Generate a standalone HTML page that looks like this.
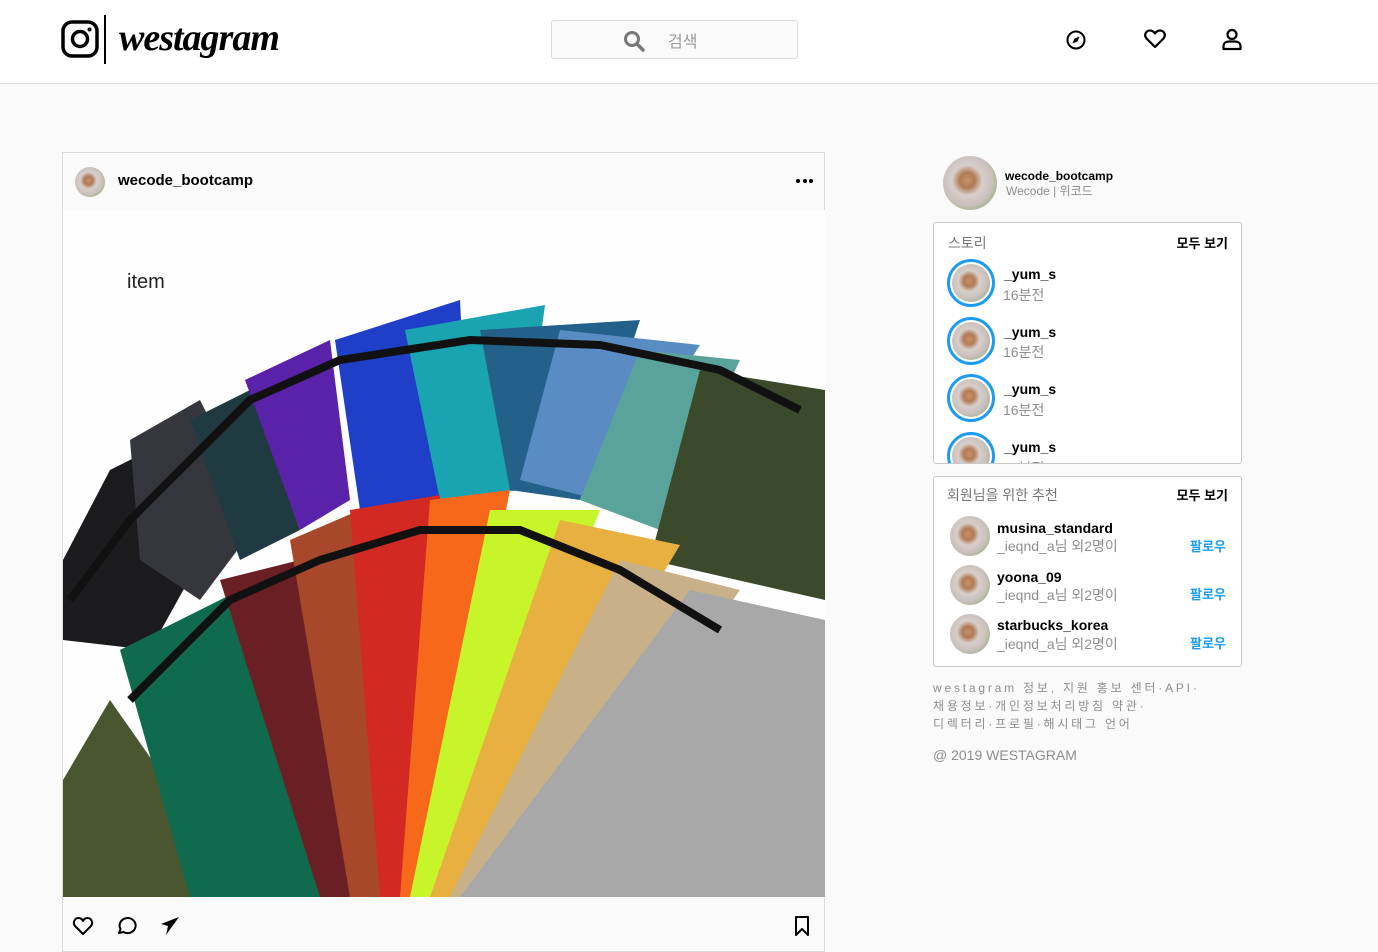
<!DOCTYPE html>
<html><head><meta charset="utf-8"><style>
*{margin:0;padding:0;box-sizing:border-box}
body{width:1378px;height:944px;overflow:hidden;background:#fafafa;font-family:"Liberation Sans","Noto Sans CJK KR",sans-serif;position:relative}
.hdr{position:absolute;left:0;top:0;width:1378px;height:84px;background:#fff;border-bottom:1px solid #dbdbdb}
.abs{position:absolute}
.av{border-radius:50%;background:radial-gradient(circle at 45% 45%,#c9926a 0,#b07a55 18%,#d8cfcb 36%,#c9c0bd 60%,#9ab07a 80%,#d9d2cf 100%)}
.box{position:absolute;left:933px;width:309px;background:#fff;border:1px solid #c8c8c8;border-radius:3px;overflow:hidden}
.ring{position:absolute;left:13px;width:48px;height:48px;border-radius:50%;border:3px solid #1c9bf0;padding:2px;background:#fff}
.ring div{width:100%;height:100%}
.nm{position:absolute;font-weight:bold;font-size:14px;color:#000}
.sub{position:absolute;font-size:14px;color:#8e8e8e}
.fol{position:absolute;right:15px;font-size:13px;font-weight:bold;color:#1c9bf0}
</style></head><body>
<div class="hdr">
 <svg class="abs" style="left:61px;top:20px" width="38" height="38" viewBox="0 0 38 38"><rect x="2" y="2" width="34" height="34" rx="9" fill="none" stroke="#000" stroke-width="3.5"/><circle cx="19" cy="19" r="7.5" fill="none" stroke="#000" stroke-width="3.5"/><circle cx="28.5" cy="9.5" r="2" fill="#000"/></svg>
 <div class="abs" style="left:104px;top:15px;width:2px;height:49px;background:#000"></div>
 <div class="abs" style="left:119px;top:16px;font-family:'Liberation Serif',serif;font-style:italic;font-weight:bold;font-size:38px;letter-spacing:-1px;color:#000">westagram</div>
 <div class="abs" style="left:551px;top:20px;width:247px;height:39px;background:#fafafa;border:1px solid #dbdbdb;border-radius:3px"></div>
 <svg class="abs" style="left:623px;top:30px" width="22" height="22" viewBox="0 0 22 22"><circle cx="9" cy="9" r="6.5" fill="none" stroke="#777" stroke-width="3"/><line x1="14" y1="14" x2="20" y2="20" stroke="#777" stroke-width="3.5" stroke-linecap="round"/></svg>
 <div class="abs" style="left:668px;top:28px;font-size:16px;color:#999">검색</div>
 <svg class="abs" style="left:1065px;top:29px" width="22" height="22" viewBox="0 0 22 22"><circle cx="11" cy="11" r="8.5" fill="none" stroke="#000" stroke-width="2"/><path d="M14.5 7.5 L12.5 12.5 L7.5 14.5 L9.5 9.5Z" fill="#000"/></svg>
 <svg class="abs" style="left:1143px;top:28px" width="24" height="22" viewBox="0 0 24 22"><path d="M12 19 L3.5 10.5 C0.5 7 3 2.5 7 2.5 C9.5 2.5 11 4 12 5.5 C13 4 14.5 2.5 17 2.5 C21 2.5 23.5 7 20.5 10.5Z" fill="none" stroke="#000" stroke-width="2.2" stroke-linejoin="round"/></svg>
 <svg class="abs" style="left:1220px;top:27px" width="24" height="24" viewBox="0 0 24 24"><circle cx="12" cy="7.5" r="4.5" fill="none" stroke="#000" stroke-width="2.2"/><path d="M3.5 22 V19 C3.5 16 6 14.5 9 14.5 H15 C18 14.5 20.5 16 20.5 19 V22Z" fill="none" stroke="#000" stroke-width="2.2" stroke-linejoin="round"/></svg>
</div>

<div class="abs" style="left:62px;top:152px;width:763px;height:800px;border:1px solid #dbdbdb;background:#fafafa">
 <div class="abs av" style="left:12px;top:14px;width:30px;height:30px"></div>
 <div class="nm" style="left:55px;top:19px;font-size:15px">wecode_bootcamp</div>
 <div class="abs" style="left:733px;top:26px;width:17px;height:5px;display:flex;justify-content:space-between"><i style="width:4px;height:4px;border-radius:50%;background:#000"></i><i style="width:4px;height:4px;border-radius:50%;background:#000"></i><i style="width:4px;height:4px;border-radius:50%;background:#000"></i></div>
 <svg class="abs" style="left:0;top:57px" width="762" height="688" viewBox="63 210 762 688">
  <rect x="63" y="210" width="762" height="688" fill="#fefefe"/>
  <text x="127" y="288" font-family="Liberation Sans,sans-serif" font-size="20" fill="#222">item</text>
  <polygon points="63,560 110,470 150,450 200,560 150,650 63,640" fill="#1b1b1d"/>
  <polygon points="130,440 200,400 260,520 200,600 140,560" fill="#36363d"/>
  <polygon points="190,420 250,390 300,530 240,560" fill="#1f3a40"/>
  <polygon points="245,380 330,340 350,500 300,530" fill="#5a22a8"/>
  <polygon points="335,340 460,300 470,500 360,510" fill="#1f3fc8"/>
  <polygon points="405,330 545,305 520,490 440,500" fill="#1aa3b0"/>
  <polygon points="480,330 640,320 580,500 510,490" fill="#23608a"/>
  <polygon points="560,330 700,345 600,500 520,480" fill="#5a8cc4"/>
  <polygon points="640,350 740,360 660,530 580,500" fill="#5aa39a"/>
  <polygon points="700,370 825,390 825,600 650,560" fill="#3b4a2a"/>
  <polygon points="63,780 110,700 180,800 200,897 63,897" fill="#4a5630"/>
  <polygon points="120,650 240,590 330,897 190,897" fill="#0f6a4e"/>
  <polygon points="220,580 300,560 370,897 320,897" fill="#6a1f24"/>
  <polygon points="290,540 360,510 390,897 350,897" fill="#a8482a"/>
  <polygon points="350,510 440,495 420,897 380,897" fill="#d22a22"/>
  <polygon points="430,500 510,490 430,897 400,897" fill="#f8681a"/>
  <polygon points="490,510 600,510 450,897 410,897" fill="#c8f52a"/>
  <polygon points="560,520 680,545 470,897 430,897" fill="#e8b040"/>
  <polygon points="620,560 740,590 520,897 450,897" fill="#c8b088"/>
  <polygon points="690,590 825,620 825,897 460,897" fill="#a8a8a8"/>
  <g stroke="#111" stroke-width="8" fill="none"><path d="M70 600 L130 520 L250 400 L340 360 L470 340 L600 345 L720 370 L800 410"/><path d="M130 700 L230 600 L320 560 L420 530 L520 530 L620 570 L720 630"/></g>
 </svg>
 <svg class="abs" style="left:9px;top:762px" width="22" height="22" viewBox="0 0 22 22"><path d="M11 19 L3 11 C0.5 8 2.5 3 6.5 3 C9 3 10.3 4.5 11 6 C11.7 4.5 13 3 15.5 3 C19.5 3 21.5 8 19 11Z" fill="none" stroke="#000" stroke-width="2" stroke-linejoin="round"/></svg>
 <svg class="abs" style="left:52px;top:762px" width="22" height="22" viewBox="0 0 22 22"><path d="M4 18 L5.5 14 A8 7.5 0 1 1 8.5 17 Z" fill="none" stroke="#000" stroke-width="2" stroke-linejoin="round"/></svg>
 <svg class="abs" style="left:96px;top:762px" width="22" height="22" viewBox="0 0 22 22"><path d="M20 2 L2 9 L9 11 L7 20 Z" fill="#000"/></svg>
 <svg class="abs" style="left:730px;top:762px" width="18" height="22" viewBox="0 0 18 22"><path d="M3 2 H15 V20 L9 14 L3 20Z" fill="none" stroke="#000" stroke-width="2" stroke-linejoin="round"/></svg>
</div>

<div class="abs av" style="left:943px;top:156px;width:54px;height:54px"></div>
<div class="nm" style="left:1005px;top:169px;font-size:12px">wecode_bootcamp</div>
<div class="sub" style="left:1006px;top:182px;font-size:12px">Wecode | 위코드</div>

<div class="box" style="top:222px;height:242px">
 <div class="sub" style="left:14px;top:10px;color:#777">스토리</div>
 <div class="nm" style="right:13px;top:10px;font-size:13px">모두 보기</div>
 <div class="ring" style="top:36px"><div class="av"></div></div>
 <div class="nm" style="left:70px;top:43px">_yum_s</div><div class="sub" style="left:69px;top:62px">16분전</div>
 <div class="ring" style="top:94px"><div class="av"></div></div>
 <div class="nm" style="left:70px;top:101px">_yum_s</div><div class="sub" style="left:69px;top:119px">16분전</div>
 <div class="ring" style="top:151px"><div class="av"></div></div>
 <div class="nm" style="left:70px;top:158px">_yum_s</div><div class="sub" style="left:69px;top:177px">16분전</div>
 <div class="ring" style="top:209px"><div class="av"></div></div>
 <div class="nm" style="left:70px;top:216px">_yum_s</div><div class="sub" style="left:69px;top:235px">16분전</div>
</div>

<div class="box" style="top:476px;height:191px">
 <div class="sub" style="left:13px;top:8px;color:#777">회원님을 위한 추천</div>
 <div class="nm" style="right:13px;top:8px;font-size:13px">모두 보기</div>
 <div class="abs av" style="left:16px;top:39px;width:40px;height:40px"></div>
 <div class="nm" style="left:63px;top:43px">musina_standard</div><div class="sub" style="left:63px;top:59px">_ieqnd_a님 외2명이</div><div class="fol" style="top:59px">팔로우</div>
 <div class="abs av" style="left:16px;top:88px;width:40px;height:40px"></div>
 <div class="nm" style="left:63px;top:92px">yoona_09</div><div class="sub" style="left:63px;top:108px">_ieqnd_a님 외2명이</div><div class="fol" style="top:107px">팔로우</div>
 <div class="abs av" style="left:16px;top:137px;width:40px;height:40px"></div>
 <div class="nm" style="left:63px;top:140px">starbucks_korea</div><div class="sub" style="left:63px;top:157px">_ieqnd_a님 외2명이</div><div class="fol" style="top:156px">팔로우</div>
</div>

<div class="abs" style="left:933px;top:679px;font-size:12px;line-height:18px;letter-spacing:2.8px;color:#8e8e8e">westagram 정보, 지원 홍보 센터·API·<br>채용정보·개인정보처리방침 약관·<br>디렉터리·프로필·해시태그 언어</div>
<div class="abs" style="left:933px;top:747px;font-size:14px;color:#8e8e8e">@ 2019 WESTAGRAM</div>
</body></html>
